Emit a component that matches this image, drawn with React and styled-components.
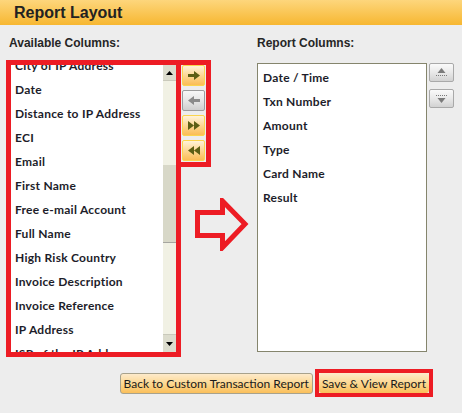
import styled, { createGlobalStyle } from 'styled-components'

const GlobalStyle = createGlobalStyle`
  html, body {
    margin: 0;
    padding: 0;
    background: #ededed;
  }
  body {
    width: 462px;
    height: 413px;
    overflow: hidden;
    font-family: 'Liberation Sans', Arial, sans-serif;
  }
`

const available = [
  'City of IP Address',
  'Date',
  'Distance to IP Address',
  'ECI',
  'Email',
  'First Name',
  'Free e-mail Account',
  'Full Name',
  'High Risk Country',
  'Invoice Description',
  'Invoice Reference',
  'IP Address',
  'ISP of the IP Address'
]

const selected = ['Date / Time', 'Txn Number', 'Amount', 'Type', 'Card Name', 'Result']

const Page = styled.div`
  width: 462px;
  height: 413px;
`

const Header = styled.header`
  height: 25px;
  padding-left: 14px;
  display: flex;
  align-items: center;
  background: linear-gradient(#fdd67c, #f7b731);
`

const Title = styled.h1`
  margin: 0;
  font: bold 16px 'Liberation Sans', Arial, sans-serif;
  color: #222;
`

const Content = styled.div`
  padding: 11px 0 0 6px;
`

const Columns = styled.div`
  display: flex;
  gap: 8px;
`

const Side = styled.div`
  display: flex;
  flex-direction: column;
`

const Label = styled.div`
  font: bold 12px/15px 'Liberation Sans', Arial, sans-serif;
  color: #262626;
  padding-left: ${p => p.$indent || 0}px;
  margin-bottom: ${p => p.$gap}px;
`

const Row = styled.div`
  display: flex;
  align-items: flex-start;
`

// red highlight round the available list
const ListFrame = styled.div`
  width: 165px;
  height: 287px;
  border: 5px solid #ed1c24;
  display: flex;
  background: #fff;
`

const ListView = styled.div`
  flex: 1;
  overflow: hidden;
`

const Items = styled.div`
  margin-top: ${p => p.$offset || 0}px;
  padding-left: ${p => p.$pad}px;
`

const Item = styled.div`
  height: 24px;
  font: bold 12px/24px 'Lato', 'Liberation Sans', sans-serif;
  letter-spacing: 0.25px;
  color: #1d1d2a;
  white-space: nowrap;
`

const ScrollBar = styled.div`
  width: 13px;
  display: flex;
  flex-direction: column;
  background: #f1f1e4;
`

const ScrollArrow = styled.div`
  height: ${p => p.$h}px;
  background: #dcdccd;
  display: flex;
  align-items: center;
  justify-content: center;
  border-${p => (p.$down ? 'top' : 'bottom')}: 1px solid #c9c9bb;
`

const Track = styled.div`
  flex: 1;
  padding-top: 84px;
`

const Thumb = styled.div`
  height: 77px;
  background: #d8d8c8;
  border-bottom: 1px solid #a6a6a0;
`

const MoveColumn = styled.div`
  width: 68px;
  display: flex;
  flex-direction: column;
`

const ButtonFrame = styled.div`
  width: 25px;
  height: 97px;
  border: 5px solid #ed1c24;
  border-left: none;
  display: flex;
  flex-direction: column;
  gap: 4px;
`

const MoveButton = styled.button`
  width: 23px;
  height: 21px;
  margin: 0 0 0 1px;
  padding: 0;
  display: flex;
  align-items: center;
  justify-content: center;
  border-radius: 2px;
  border: 1px solid ${p => (p.$disabled ? '#9c9c9c' : '#fbd54e')};
  background: ${p =>
    p.$disabled
      ? 'linear-gradient(#f7f7f7, #e6e6e6 50%, #cfcfcf)'
      : 'linear-gradient(#fff3d9, #fdd894 50%, #fbbd55)'};
`

const BigArrow = styled.svg`
  margin: 31px 0 0 14px;
  display: block;
`

const ReportList = styled.div`
  box-sizing: border-box;
  width: 170px;
  height: 289px;
  margin-top: 3px;
  padding-top: 2px;
  border: 1px solid #85856d;
  background: #fff;
`

const OrderColumn = styled.div`
  margin: 3px 0 0 2px;
  display: flex;
  flex-direction: column;
  gap: 7px;
`

const OrderButton = styled.button`
  width: 25px;
  height: 19px;
  padding: 0;
  display: flex;
  align-items: center;
  justify-content: center;
  border: 1px solid #a9a9a9;
  border-radius: 2px;
  background: linear-gradient(#fafafa, #e9e9e9 50%, #d2d2d2);
`

const Footer = styled.div`
  display: flex;
  justify-content: flex-end;
  align-items: center;
  gap: 2px;
  margin-top: 12px;
  padding-right: 29px;
`

const ActionButton = styled.button`
  height: ${p => p.$h}px;
  padding: 0 ${p => p.$pad}px;
  font: 12px 'Lato', 'Liberation Sans', sans-serif;
  color: #1a1a1a;
  border: ${p => (p.$flat ? 'none' : '1px solid #a8a28c')};
  border-radius: 3px;
  background: linear-gradient(#fdeacb, #fcd68c 55%, #fbbf5a);
  white-space: nowrap;
`

const Highlight = styled.div`
  border: 4px solid #ed1c24;
  display: flex;
`

const Arrow = ({ dir, color }) => (
  <svg width='12' height='9' viewBox='0 0 12 9'>
    <path
      d={dir === 'right' ? 'M0 3h6V0l6 4.5L6 9V6H0z' : 'M12 3H6V0L0 4.5 6 9V6h6z'}
      fill={color}
    />
  </svg>
)

const Double = ({ dir }) => (
  <svg width='12' height='9' viewBox='0 0 12 9'>
    <path
      d={dir === 'right' ? 'M0 0l6 4.5L0 9zM6 0l6 4.5L6 9z' : 'M12 0L6 4.5 12 9zM6 0L0 4.5 6 9z'}
      fill='#5d5f14'
    />
  </svg>
)

const Tri = ({ down }) => (
  <svg width='7' height='4' viewBox='0 0 7 4'>
    <path d={down ? 'M0 0h7L3.5 4z' : 'M0 4h7L3.5 0z'} fill='#000' />
  </svg>
)

const OrderIcon = ({ down }) => (
  <svg width='13' height='9' viewBox='0 0 13 9'>
    {down ? (
      <>
        <path d='M1 1.5h11' stroke='#7b7b7b' strokeDasharray='1 1' />
        <path d='M2.5 4h8l-4 5z' fill='#7b7b7b' />
      </>
    ) : (
      <>
        <path d='M2.5 5h8l-4-5z' fill='#7b7b7b' />
        <path d='M1 7.5h11' stroke='#7b7b7b' strokeDasharray='1 1' />
      </>
    )}
  </svg>
)

export default function App () {
  return (
    <Page>
      <GlobalStyle />
      <Header>
        <Title>Report Layout</Title>
      </Header>
      <Content>
        <Columns>
          <Side>
            <Label $indent={3} $gap={9}>Available Columns:</Label>
            <Row>
              <ListFrame>
                <ListView>
                  <Items $offset={-11} $pad={4}>
                    {available.map(name => <Item key={name}>{name}</Item>)}
                  </Items>
                </ListView>
                <ScrollBar>
                  <ScrollArrow $h={15}><Tri /></ScrollArrow>
                  <Track><Thumb /></Track>
                  <ScrollArrow $h={17} $down><Tri down /></ScrollArrow>
                </ScrollBar>
              </ListFrame>
              <MoveColumn>
                <ButtonFrame>
                  <MoveButton><Arrow dir='right' color='#5d5f14' /></MoveButton>
                  <MoveButton $disabled><Arrow dir='left' color='#8a8a8a' /></MoveButton>
                  <MoveButton><Double dir='right' /></MoveButton>
                  <MoveButton><Double dir='left' /></MoveButton>
                </ButtonFrame>
                <BigArrow width='54' height='53' viewBox='0 0 54 53'>
                  <polygon
                    points='2.5,14.5 27.5,14.5 27.5,3 50,26 27.5,49.5 27.5,37.5 2.5,37.5'
                    fill='none'
                    stroke='#ed1c24'
                    strokeWidth='5'
                  />
                </BigArrow>
              </MoveColumn>
            </Row>
          </Side>
          <Side>
            <Label $gap={9}>Report Columns:</Label>
            <Row>
              <ReportList>
                <Items $pad={5}>
                  {selected.map(name => <Item key={name}>{name}</Item>)}
                </Items>
              </ReportList>
              <OrderColumn>
                <OrderButton><OrderIcon /></OrderButton>
                <OrderButton><OrderIcon down /></OrderButton>
              </OrderColumn>
            </Row>
          </Side>
        </Columns>
        <Footer>
          <ActionButton $h={21} $pad={3}>Back to Custom Transaction Report</ActionButton>
          <Highlight>
            <ActionButton $h={20} $pad={3} $flat>Save &amp; View Report</ActionButton>
          </Highlight>
        </Footer>
      </Content>
    </Page>
  )
}
